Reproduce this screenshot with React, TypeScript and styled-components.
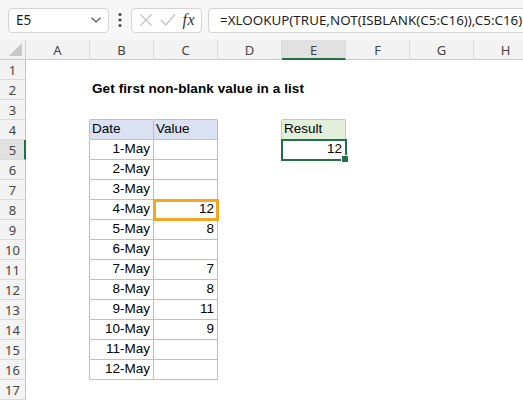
import React from "react";
import styled, { createGlobalStyle } from "styled-components";

const GlobalStyle = createGlobalStyle`
  html, body {
    margin: 0;
    padding: 0;
    background: #ffffff;
    overflow: hidden;
  }
  body {
    font-family: "Liberation Sans", Arial, sans-serif;
  }
`;

const Page = styled.div`
  width: 523px;
  height: 400px;
  overflow: hidden;
`;

const Toolbar = styled.div`
  height: 40px;
  background: #f7f7f7;
  display: flex;
  align-items: center;
  padding-left: 8px;
  box-sizing: border-box;
  white-space: nowrap;
  & > * {
    flex-shrink: 0;
  }
`;

const NameBox = styled.div`
  width: 101px;
  height: 25px;
  box-sizing: border-box;
  border: 1px solid #d4d4d4;
  border-radius: 4px;
  background: #ffffff;
  display: flex;
  align-items: center;
  justify-content: space-between;
  padding: 0 6px 0 7px;
  font-family: "Noto Sans", "Open Sans", sans-serif;
  font-size: 13.5px;
  color: #1f1f1f;
`;

const Dots = styled.div`
  width: 22px;
  display: flex;
  justify-content: center;
`;

const FxBox = styled.div`
  width: 71px;
  height: 25px;
  box-sizing: border-box;
  border: 1px solid #d4d4d4;
  border-radius: 4px;
  background: #ffffff;
  display: flex;
  align-items: center;
  justify-content: space-between;
  padding: 0 6px 0 7px;
`;

const Fx = styled.span`
  font-family: "Liberation Serif", "DejaVu Serif", serif;
  font-style: italic;
  font-size: 16px;
  color: #333333;
  letter-spacing: 0.5px;
`;

const FormulaInput = styled.div`
  margin-left: 6px;
  flex: 1 0 auto;
  height: 25px;
  box-sizing: border-box;
  border: 1px solid #d4d4d4;
  border-right: none;
  border-radius: 4px 0 0 4px;
  background: #ffffff;
  display: flex;
  align-items: center;
  padding-left: 11px;
  font-family: "Noto Sans", "Open Sans", sans-serif;
  font-size: 13.4px;
  color: #1f1f1f;
`;

const Sheet = styled.div`
  display: grid;
  grid-template-columns: 26px repeat(8, 64px);
  grid-template-rows: repeat(18, 20px);
`;

const HeadBase = styled.div`
  box-sizing: border-box;
  background: #f3f3f3;
  font-family: "Noto Sans", "Open Sans", sans-serif;
  font-size: 13px;
  color: #444444;
  display: flex;
  align-items: center;
  justify-content: center;
`;

const Corner = styled(HeadBase)`
  border-right: 1px solid #d0d0d0;
  border-bottom: 1px solid #c8c8c8;
  align-items: flex-end;
  justify-content: flex-end;
  padding: 0 3px 3px 0;
`;

const ColHead = styled(HeadBase)<{ $active?: boolean }>`
  background: ${(p) => (p.$active ? "#e1e1e1" : "#f3f3f3")};
  border-right: 1px solid #dadada;
  border-bottom: ${(p) => (p.$active ? "2px solid #217346" : "1px solid #c8c8c8")};
  padding-top: ${(p) => (p.$active ? "1px" : "0")};
`;

const RowHead = styled(HeadBase)<{ $active?: boolean }>`
  background: ${(p) => (p.$active ? "#e1e1e1" : "#f3f3f3")};
  border-bottom: 1px solid #dadada;
  border-right: ${(p) => (p.$active ? "2px solid #217346" : "1px solid #c8c8c8")};
  padding-left: ${(p) => (p.$active ? "1px" : "0")};
`;

const Cell = styled.div<{
  $align?: "left" | "right";
  $bold?: boolean;
  $bg?: string;
  $right?: string;
  $bottom?: string;
}>`
  position: relative;
  box-sizing: border-box;
  background: ${(p) => p.$bg || "transparent"};
  border-right: 1px solid ${(p) => p.$right || "transparent"};
  border-bottom: 1px solid ${(p) => p.$bottom || "transparent"};
  display: flex;
  align-items: flex-end;
  justify-content: ${(p) => (p.$align === "right" ? "flex-end" : "flex-start")};
  padding: 0 3px 2px 2px;
  font-size: 13.5px;
  line-height: 16px;
  font-weight: ${(p) => (p.$bold ? 700 : 400)};
  letter-spacing: ${(p) => (p.$bold ? "0.1px" : "0")};
  color: #000000;
  white-space: nowrap;
  overflow: visible;
`;

const Selection = styled.div<{ $color: string; $w: number }>`
  position: absolute;
  top: -1px;
  left: -1px;
  right: -2px;
  bottom: -2px;
  border: ${(p) => p.$w}px solid ${(p) => p.$color};
  pointer-events: none;
  z-index: 2;
`;

const FillHandle = styled.div`
  position: absolute;
  right: -4px;
  bottom: -4px;
  width: 6px;
  height: 6px;
  background: #217346;
  border: 1px solid #ffffff;
  z-index: 3;
`;

const COLS = ["A", "B", "C", "D", "E", "F", "G", "H"];
const TABLE = "#bfbfbf";

const values: Record<number, number> = { 8: 12, 9: 8, 11: 7, 12: 8, 13: 11, 14: 9 };

type CellSpec = {
  text?: string | number;
  align?: "left" | "right";
  bold?: boolean;
  bg?: string;
  right?: string;
  bottom?: string;
  sel?: "orange" | "green";
};

function spec(row: number, col: string): CellSpec {
  const s: CellSpec = {};
  const inTable = row >= 4 && row <= 16;
  if (row === 2 && col === "B") {
    s.text = "Get first non-blank value in a list";
    s.bold = true;
  }
  if (row === 3 && (col === "B" || col === "C")) s.bottom = TABLE;
  if (inTable && col === "A") s.right = TABLE;
  if (inTable && (col === "B" || col === "C")) {
    s.right = TABLE;
    s.bottom = TABLE;
  }
  if (row === 4 && col === "B") {
    s.text = "Date";
    s.bg = "#d9e1f2";
  }
  if (row === 4 && col === "C") {
    s.text = "Value";
    s.bg = "#d9e1f2";
  }
  if (row >= 5 && row <= 16 && col === "B") {
    s.text = `${row - 4}-May`;
    s.align = "right";
  }
  if (col === "C" && values[row] !== undefined) {
    s.text = values[row];
    s.align = "right";
  }
  if (row === 8 && col === "C") s.sel = "orange";
  if (row === 3 && col === "E") s.bottom = "#c6c6c6";
  if ((row === 4 || row === 5) && col === "D") s.right = "#c6c6c6";
  if (row === 4 && col === "E") {
    s.text = "Result";
    s.bg = "#e2efda";
    s.right = "#c6c6c6";
    s.bottom = "#c6c6c6";
  }
  if (row === 5 && col === "E") {
    s.text = 12;
    s.align = "right";
    s.sel = "green";
  }
  return s;
}

const Chevron = () => (
  <svg width="12" height="8" viewBox="0 0 12 8">
    <path d="M1.5 1.8 L6 6 L10.5 1.8" fill="none" stroke="#555" strokeWidth="1.2" />
  </svg>
);

const VDots = () => (
  <svg width="4" height="16" viewBox="0 0 4 16">
    <circle cx="2" cy="2.5" r="1.5" fill="#444" />
    <circle cx="2" cy="8" r="1.5" fill="#444" />
    <circle cx="2" cy="13.5" r="1.5" fill="#444" />
  </svg>
);

const Cross = () => (
  <svg width="14" height="14" viewBox="0 0 14 14">
    <path d="M1.5 1.5 L12.5 12.5 M12.5 1.5 L1.5 12.5" stroke="#c4c4c4" strokeWidth="1.3" />
  </svg>
);

const Check = () => (
  <svg width="16" height="14" viewBox="0 0 16 14">
    <path d="M1 7 L5.8 12 L15 1.5" fill="none" stroke="#c4c4c4" strokeWidth="1.3" />
  </svg>
);

const CornerMark = () => (
  <svg width="13" height="13" viewBox="0 0 13 13">
    <path d="M13 0 L13 13 L0 13 Z" fill="#c8c8c8" />
  </svg>
);

export default function App() {
  const rows = Array.from({ length: 17 }, (_, i) => i + 1);
  return (
    <Page>
      <GlobalStyle />
      <Toolbar>
        <NameBox>
          <span>E5</span>
          <Chevron />
        </NameBox>
        <Dots>
          <VDots />
        </Dots>
        <FxBox>
          <Cross />
          <Check />
          <Fx>fx</Fx>
        </FxBox>
        <FormulaInput>=XLOOKUP(TRUE,NOT(ISBLANK(C5:C16)),C5:C16)</FormulaInput>
      </Toolbar>
      <Sheet>
        <Corner>
          <CornerMark />
        </Corner>
        {COLS.map((c) => (
          <ColHead key={c} $active={c === "E"}>
            {c}
          </ColHead>
        ))}
        {rows.map((r) => (
          <React.Fragment key={r}>
            <RowHead $active={r === 5}>{r}</RowHead>
            {COLS.map((c) => {
              const s = spec(r, c);
              return (
                <Cell
                  key={c}
                  $align={s.align}
                  $bold={s.bold}
                  $bg={s.bg}
                  $right={s.right}
                  $bottom={s.bottom}
                >
                  {s.text}
                  {s.sel === "orange" && <Selection $color="#f5a51e" $w={3} />}
                  {s.sel === "green" && (
                    <>
                      <Selection $color="#217346" $w={2} />
                      <FillHandle />
                    </>
                  )}
                </Cell>
              );
            })}
          </React.Fragment>
        ))}
      </Sheet>
    </Page>
  );
}
